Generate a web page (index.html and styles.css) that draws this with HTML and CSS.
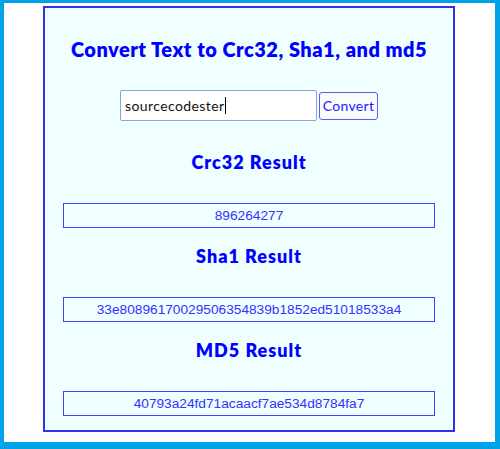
FILE: index.html
```html
<!DOCTYPE html>
<html>
<head>
<meta charset="utf-8">
<title>Convert Text to Crc32, Sha1, and md5</title>
<link rel="stylesheet" href="styles.css">
</head>
<body>
<div class="frame">
  <div class="panel">
    <h2 class="title">Convert Text to Crc32, Sha1, and md5</h2>
    <form class="form-row">
      <div class="text-input">sourcecodester<span class="caret"></span></div>
      <button type="button" class="btn">Convert</button>
    </form>
    <h3 class="result-title">Crc32 Result</h3>
    <div class="result-box">896264277</div>
    <h3 class="result-title">Sha1 Result</h3>
    <div class="result-box">33e80896170029506354839b1852ed51018533a4</div>
    <h3 class="result-title">MD5 Result</h3>
    <div class="result-box">40793a24fd71acaacf7ae534d8784fa7</div>
  </div>
</div>
</body>
</html>
```

FILE: styles.css
```css
html, body {
  margin: 0;
  padding: 0;
  background: #ffffff;
}

.frame {
  box-sizing: border-box;
  width: 500px;
  height: 449px;
  border-style: solid;
  border-color: #00a2e8;
  border-width: 3px 5px 7px 4px;
  background: #ffffff;
  padding: 3px 0 0 39px;
}

.panel {
  box-sizing: border-box;
  width: 412px;
  height: 426px;
  border: 2px solid #3030f0;
  background: #f0ffff;
  padding: 29px 18px 0;
  font-family: Lato, "Open Sans", sans-serif;
}

.title {
  margin: 0;
  font-size: 20px;
  line-height: 24px;
  font-weight: 800;
  letter-spacing: 0.5px;
  color: #0000ff;
  text-align: center;
}

.form-row {
  display: flex;
  justify-content: center;
  align-items: center;
  gap: 2px;
  margin: 29px 0 0;
}

.text-input {
  box-sizing: border-box;
  width: 197px;
  height: 31px;
  border: 1px solid #8aa6d8;
  border-radius: 2px;
  background: #ffffff;
  padding: 0 0 0 4px;
  display: flex;
  align-items: center;
  font-size: 14px;
  letter-spacing: 0.4px;
  color: #111111;
}

.caret {
  display: inline-block;
  width: 1px;
  height: 17px;
  background: #000000;
  margin-left: 1px;
}

.btn {
  box-sizing: border-box;
  width: 59px;
  height: 28px;
  border: 1px solid #5a5aff;
  border-radius: 3px;
  background: #fafcff;
  color: #2020ff;
  font-family: Lato, "Open Sans", sans-serif;
  font-size: 14px;
  letter-spacing: 0.3px;
  padding: 0;
}

.result-title {
  margin: 30px 0 0;
  font-size: 18px;
  line-height: 22px;
  font-weight: 800;
  letter-spacing: 1px;
  color: #0000ff;
  text-align: center;
}

.result-box + .result-title {
  margin-top: 17px;
}

.result-box {
  box-sizing: border-box;
  height: 25px;
  margin-top: 30px;
  border: 1px solid #4040ff;
  display: flex;
  align-items: center;
  justify-content: center;
  font-family: "Liberation Sans", Arial, sans-serif;
  font-size: 13.7px;
  color: #3333ff;
}
```
